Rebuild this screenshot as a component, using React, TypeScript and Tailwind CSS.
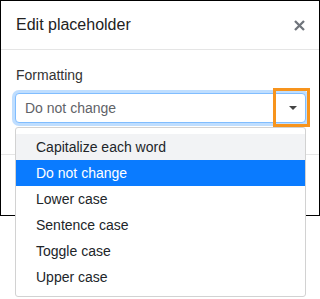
import { useState } from 'react';

const options = [
    'Capitalize each word',
    'Do not change',
    'Lower case',
    'Sentence case',
    'Toggle case',
    'Upper case',
];

export default function App() {
    const [selected] = useState('Do not change');
    const hovered = 'Capitalize each word';

    return (
        <div className="relative w-[320px] h-[299px] bg-white font-['Liberation_Sans',Arial,sans-serif] text-[#212529]">
            {/* Dialog */}
            <div className="w-[320px] h-[216px] border border-black flex flex-col">
                <div className="h-[49px] shrink-0 border-b border-[#e5e5e5] flex items-center justify-between pl-[15px] pr-[14px]">
                    <h2 className="text-[16px] leading-6 text-[#222]">Edit placeholder</h2>
                    <svg width="11" height="11" viewBox="0 0 11 11" className="mt-[1px]">
                        <path d="M1 1 L10 10 M10 1 L1 10" stroke="#6f747b" strokeWidth="2.3" strokeLinecap="butt" />
                    </svg>
                </div>

                <div className="h-[105px] shrink-0 border-b border-[#e5e5e5] pt-[15px] pl-[14px]">
                    <label className="block text-[14px] leading-5 text-[#333] pl-[1px] mb-2">Formatting</label>
                    <div className="w-[291px] h-[30px] border border-[#80bdff] rounded shadow-[0_0_0_3px_rgba(0,123,255,0.25)] flex items-center justify-between pl-[9px] pr-[8px] bg-white">
                        <span className="text-[14px] leading-5 text-[#5f6368]">{selected}</span>
                        <span className="w-0 h-0 border-x-[4px] border-x-transparent border-t-[4px] border-t-[#444]"></span>
                    </div>
                </div>
                <div className="flex-1"></div>
            </div>

            {/* Highlight around arrow */}
            <div className="absolute left-[273px] top-[88px] w-[37px] h-[39px] border-[3px] border-[#f7941d]"></div>

            {/* Open list */}
            <ul className="absolute left-[15px] top-[127px] w-[291px] h-[170px] border border-[#d2d2d2] rounded-[3px] bg-white pt-[6px] pb-[6px]">
                {options.map(opt => (
                    <li
                        key={opt}
                        className={
                            opt === selected
                                ? 'h-[26px] flex items-center pl-5 text-[14px] leading-5 bg-[#0a7bff] text-white'
                                : opt === hovered
                                    ? 'h-[26px] flex items-center pl-5 text-[14px] leading-5 bg-[#f2f3f5] text-[#212529]'
                                    : 'h-[26px] flex items-center pl-5 text-[14px] leading-5 text-[#212529]'
                        }
                    >
                        {opt}
                    </li>
                ))}
            </ul>
        </div>
    );
}
